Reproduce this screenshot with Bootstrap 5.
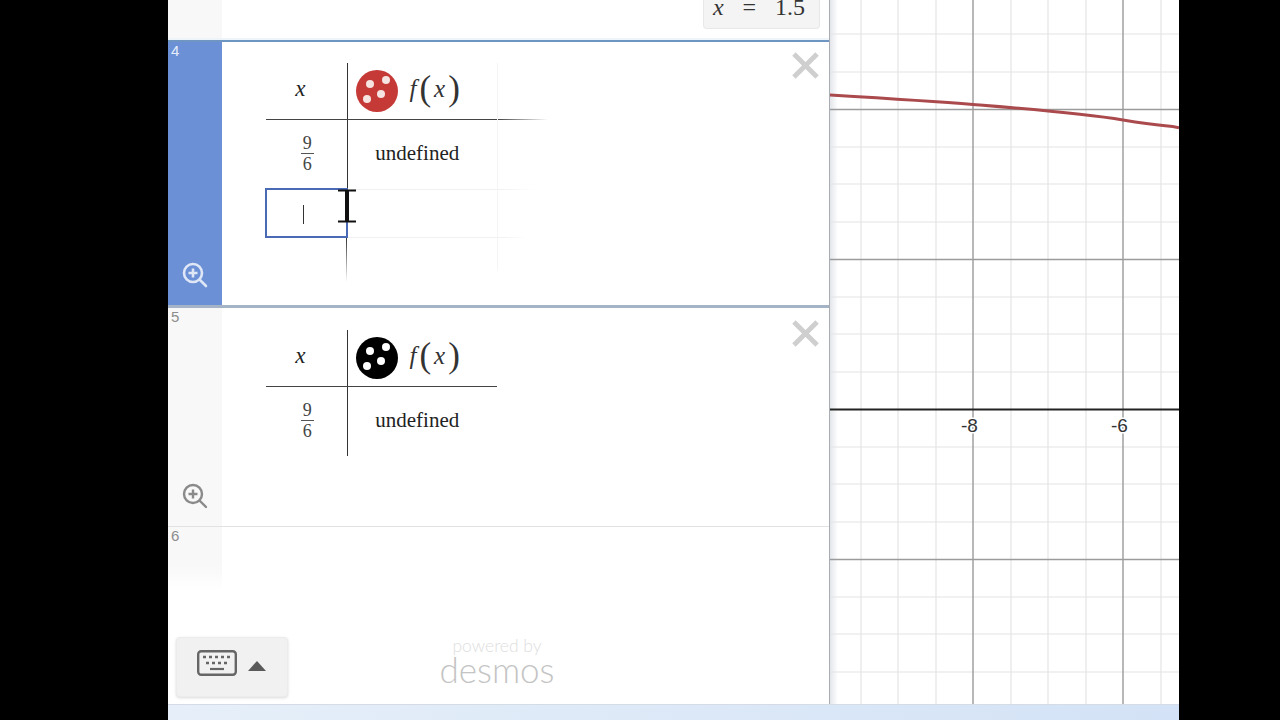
<!DOCTYPE html>
<html lang="en">
<head>
    <meta charset="UTF-8" />
    <meta name="viewport" content="width=device-width, initial-scale=1.0" />
    <title>Desmos table</title>
    <link href="https://cdn.jsdelivr.net/npm/bootstrap@5.3.0/dist/css/bootstrap.min.css" rel="stylesheet" />
    <style>
        body { background: #000; height: 720px; overflow: hidden; font-family: "Liberation Serif", serif; color: #222; }
        .stage { width: 1011px; height: 720px; margin-left: 168px; background: #fff; }
        .work { height: 704px; }
        .strip { height: 16px; background: linear-gradient(90deg, #e6eff9, #d3e2f6); border-top: 1px solid #d5dce6; }
        .expr-panel { width: 661px; }
        .graph-pane { width: 350px; border-left: 1px solid #a9adb3; background: linear-gradient(90deg, #e3e6ea, #fff 8px); }
        .graph-pane svg { display: block; }

        .expr-row { display: flex; }
        .gutter { width: 54px; flex: none; background: #f8f8f8; color: #8c8c8c; font: 15px/1.2 "Liberation Sans", sans-serif; padding: 0 3px 7px; }
        .zoom-ico { margin: 0 auto 10px; }
        .row-top { height: 40px; border-bottom: 2px solid #eef5fa; }
        .row-active { height: 268px; border-top: 2px solid #6f95c2; border-bottom: 3px solid #a5b3c7; }
        .row-active .gutter { background: #6b90d6; color: #e6edfa; }
        .row-plain { height: 219px; border-bottom: 1px solid #e2e2e2; }
        .row-empty { height: 64px; }
        .row-empty .gutter { background: linear-gradient(#f8f8f8 60%, #fff); }
        .row-body { position: relative; flex: 1; padding: 21px 0 0 44px; }
        .row-plain .row-body { padding-top: 22px; }

        .value-pill { height: 29px; width: 117px; margin: 0 9px 9px 0; padding-right: 5px; background: #f4f4f4; border: 1px solid #e8e8e8; border-top: 0; border-radius: 0 0 4px 4px; line-height: 15px; text-align: center; font-size: 24px; word-spacing: 13px; color: #333; overflow: hidden; }

        .calc-tbl { table-layout: fixed; width: 231px; color: #222; }
        .calc-tbl td { padding: 0; text-align: center; vertical-align: middle; }
        .cell-x { width: 81px; border-right: 1px solid #333; }
        .cell-y { width: 150px; }
        .tr-head td { height: 56px; border-bottom: 1px solid #444; font-size: 23px; }
        .tr-val td { height: 70px; font-size: 21px; }
        .tr-blank td { height: 48px; }
        .tr-tail td { height: 45px; }
        .x-head { display: inline-block; padding: 0 12px 4px 0; }
        .y-text { padding-right: 10px !important; }
        .row-plain .y-text { padding-bottom: 2px !important; }
        .cell-head { display: flex; align-items: center; gap: 12px; padding-left: 8px; }
        .cell-head em { font-size: 25px; letter-spacing: 3px; color: #333; position: relative; top: -2px; }
        .cell-head .paren { font-style: normal; font-size: 35px; line-height: 1; vertical-align: -3px; }
        .frac { display: inline-block; font-size: 18px; line-height: 20px; color: #444; margin-left: 2px; position: relative; top: 2px; }
        .frac span { display: block; }
        .frac span:first-child { border-bottom: 1px solid #555; padding: 0 2px; }
        .cell-focus { outline: 2px solid #4a6ab5; outline-offset: -1px; padding-right: 5px !important; }
        .caret-bar { display: inline-block; width: 1px; height: 19px; background: #333; vertical-align: middle; }
        .rule-soft td { border-bottom: 1px solid #f0f0f0; }
        .tail-fade { background: linear-gradient(#333, rgba(51,51,51,0)) no-repeat right top / 1px 100%; border-right: 0 !important; }
        .head-fade { position: absolute; left: 276px; top: 77px; width: 50px; height: 1px; background: linear-gradient(90deg, #444, rgba(68,68,68,0)); }
        .soft-a, .soft-b { position: absolute; left: 276px; height: 1px; width: 36px; background: linear-gradient(90deg, #f0f0f0, #fff); }
        .soft-a { top: 147px; }
        .soft-b { top: 195px; width: 28px; }
        .soft-v { position: absolute; left: 275px; top: 21px; width: 1px; height: 207px; background: #f5f5f5; }
        .ibeam { position: absolute; left: 115px; top: 147px; }
        .close-x { position: absolute; top: 10px; right: 10px; }
        .row-plain .close-x { top: 12px; }

        .foot-bar { flex: 1; padding: 46px 0 0 8px; }
        .kbd-btn { width: 112px; height: 60px; background: #f1f1f1; border: 1px solid #ececec; border-radius: 4px; box-shadow: 0 1px 3px rgba(0,0,0,.15); padding: 12px 0 0 20px; }
        .kbd-arrow { margin: 11px 0 0 3px; }
        .brand-box { width: 130px; margin: 0 0 0 144px; font-family: "Lato", sans-serif; text-align: center; }
        .brand-top { font-size: 17.5px; line-height: 18px; color: #dedede; font-weight: 300; }
        .brand-name { font-size: 35px; line-height: 29px; color: #c4c4c4; font-weight: 300; }
        .tick-num { font: 19px "Liberation Sans", sans-serif; fill: #333; paint-order: stroke; stroke: #fff; stroke-width: 3px; }
    </style>
</head>
<body>
    <div class="stage d-flex flex-column">
        <div class="work d-flex">
            <!-- expression list -->
            <div class="expr-panel d-flex flex-column">
                <div class="expr-row row-top">
                    <div class="gutter"></div>
                    <div class="flex-fill d-flex justify-content-end align-items-end overflow-hidden">
                        <div class="value-pill"><i>x</i> = 1.5</div>
                    </div>
                </div>

                <div class="expr-row row-active">
                    <div class="gutter d-flex flex-column justify-content-between">
                        <span>4</span>
                        <svg class="zoom-ico" width="26" height="26" viewBox="0 0 26 26" fill="none" stroke="#dfe7f7" stroke-width="2.6"><circle cx="11" cy="11" r="9"/><path d="M11 6.5v9M6.5 11h9"/><path d="M18 18l6 6" stroke-linecap="round"/></svg>
                    </div>
                    <div class="row-body">
                        <table class="calc-tbl">
                            <tr class="tr-head">
                                <td class="cell-x"><i class="x-head">x</i></td>
                                <td class="cell-y">
                                    <div class="cell-head">
                                        <svg width="42" height="42" viewBox="0 0 42 42"><circle cx="21" cy="21" r="21" fill="#c53a37"/><circle cx="14" cy="14" r="4" fill="#f6e4e2"/><circle cx="30" cy="10" r="4" fill="#f6e4e2"/><circle cx="25" cy="24" r="4" fill="#f6e4e2"/><circle cx="11" cy="29" r="4" fill="#f6e4e2"/></svg>
                                        <em>f<span class="paren">(</span>x<span class="paren">)</span></em>
                                    </div>
                                </td>
                            </tr>
                            <tr class="tr-val rule-soft">
                                <td class="cell-x"><span class="frac"><span>9</span><span>6</span></span></td>
                                <td class="cell-y y-text">undefined</td>
                            </tr>
                            <tr class="tr-blank rule-soft">
                                <td class="cell-x cell-focus"><span class="caret-bar"></span></td>
                                <td class="cell-y"></td>
                            </tr>
                            <tr class="tr-tail">
                                <td class="cell-x tail-fade"></td>
                                <td class="cell-y"></td>
                            </tr>
                        </table>
                        <span class="head-fade"></span>
                        <span class="soft-a"></span>
                        <span class="soft-b"></span>
                        <span class="soft-v"></span>
                        <svg class="ibeam" width="20" height="34" viewBox="0 0 20 34" fill="none" stroke="#111"><path d="M1 1.5h18M1 32.5h18" stroke-width="2"/><path d="M10 1.5v31" stroke-width="4"/></svg>
                        <svg class="close-x" width="27" height="27" viewBox="0 0 28 28" stroke="#cfcfcf" stroke-width="5"><path d="M2 2l24 24M26 2L2 26"/></svg>
                    </div>
                </div>

                <div class="expr-row row-plain">
                    <div class="gutter d-flex flex-column justify-content-between">
                        <span>5</span>
                        <svg class="zoom-ico" width="26" height="26" viewBox="0 0 26 26" fill="none" stroke="#8a8a8a" stroke-width="2.4"><circle cx="11" cy="11" r="9"/><path d="M11 6.5v9M6.5 11h9"/><path d="M18 18l6 6" stroke-linecap="round"/></svg>
                    </div>
                    <div class="row-body">
                        <table class="calc-tbl">
                            <tr class="tr-head">
                                <td class="cell-x"><i class="x-head">x</i></td>
                                <td class="cell-y">
                                    <div class="cell-head">
                                        <svg width="42" height="42" viewBox="0 0 42 42"><circle cx="21" cy="21" r="21" fill="#000"/><circle cx="14" cy="14" r="4" fill="#fff"/><circle cx="30" cy="10" r="4" fill="#fff"/><circle cx="25" cy="24" r="4" fill="#fff"/><circle cx="11" cy="29" r="4" fill="#fff"/></svg>
                                        <em>f<span class="paren">(</span>x<span class="paren">)</span></em>
                                    </div>
                                </td>
                            </tr>
                            <tr class="tr-val">
                                <td class="cell-x"><span class="frac"><span>9</span><span>6</span></span></td>
                                <td class="cell-y y-text">undefined</td>
                            </tr>
                        </table>
                        <svg class="close-x" width="27" height="27" viewBox="0 0 28 28" stroke="#cfcfcf" stroke-width="5"><path d="M2 2l24 24M26 2L2 26"/></svg>
                    </div>
                </div>

                <div class="expr-row row-empty">
                    <div class="gutter">6</div>
                </div>

                <div class="foot-bar d-flex align-items-start">
                    <div class="kbd-btn d-flex align-items-start gap-2">
                        <svg width="40" height="26" viewBox="0 0 40 26" fill="none" stroke="#666"><rect x="1.2" y="1.2" width="37.6" height="23.6" rx="3" stroke-width="2.4"/><path d="M6 7h3M12 7h3M18 7h3M24 7h3M30 7h3M9 13h3M15 13h3M21 13h3M27 13h3" stroke-width="2.4"/><path d="M13 19h14" stroke-width="2.2"/></svg>
                        <svg class="kbd-arrow" width="18" height="10" viewBox="0 0 18 10"><path d="M9 0l9 10H0z" fill="#5a5a5a"/></svg>
                    </div>
                    <div class="brand-box">
                        <div class="brand-top">powered by</div>
                        <div class="brand-name">desmos</div>
                    </div>
                </div>
            </div>

            <!-- graph -->
            <div class="graph-pane position-relative">
                <svg width="349" height="704" viewBox="0 0 349 704" fill="none">
                    <path stroke="#e4e4e4" stroke-width="1.2" d="M31 0v704M68 0v704M106 0v704M181 0v704M218 0v704M256 0v704M331 0v704M0 34h349M0 72h349M0 147h349M0 184h349M0 222h349M0 297h349M0 334h349M0 372h349M0 447h349M0 484h349M0 522h349M0 597h349M0 634h349M0 672h349"/>
                    <path stroke="#9b9b9b" stroke-width="1.4" d="M143 0v704M293 0v704M0 109.5h349M0 259.5h349M0 559.5h349"/>
                    <path stroke="#222" stroke-width="2" d="M0 409.5h349"/>
                    <path stroke="#ab4a4d" stroke-width="3" d="M0 95C50 98 100 101 143 104.5S250 113 293 120 335 125 349 127.7"/>
                    <text class="tick-num" x="131" y="432">-8</text>
                    <text class="tick-num" x="281" y="432">-6</text>
                </svg>
            </div>
        </div>
        <div class="strip"></div>
    </div>
    <script src="https://cdn.jsdelivr.net/npm/bootstrap@5.3.0/dist/js/bootstrap.bundle.min.js"></script>
</body>
</html>
